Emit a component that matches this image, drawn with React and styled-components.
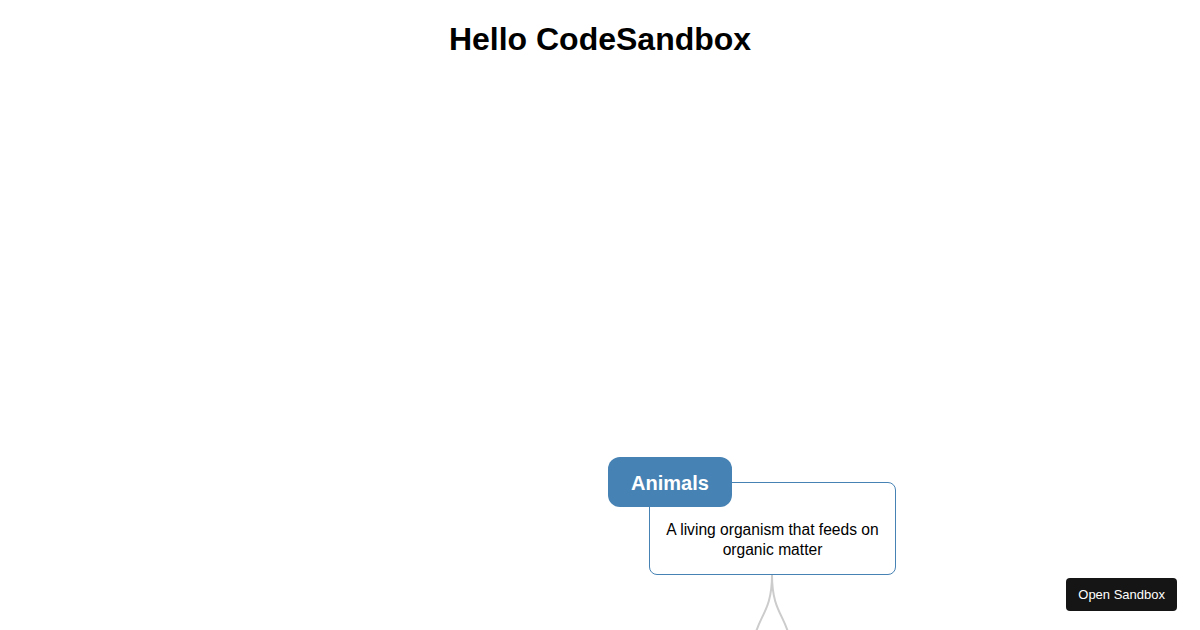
import React from 'react';
import styled, { createGlobalStyle } from 'styled-components';

const GlobalStyle = createGlobalStyle`
    html, body{
        margin: 0;
        padding: 0;
        background: #fff;
    }
    body{
        font-family: "Liberation Sans", Arial, sans-serif;
        color: #000;
    }
`;

const Page = styled.div`
    position: relative;
    height: 100vh;
    overflow: hidden;
`;

const Title = styled.h1`
    margin: 0;
    padding-top: 21px;
    text-align: center;
    font-size: 32px;
    line-height: 37px;
    font-weight: bold;
`;

const Canvas = styled.div`
    position: absolute;
    inset: 0;
`;

const Links = styled.svg`
    position: absolute;
    inset: 0;
    width: 100%;
    height: 100%;
    path{
        fill: none;
        stroke: #ccc;
        stroke-width: 2;
    }
`;

const Node = styled.div`
    position: absolute;
    left: ${({ x }) => x}px;
    top: ${({ y }) => y}px;
`;

const Label = styled.div`
    position: relative;
    z-index: 1;
    width: 124px;
    height: 50px;
    padding-top: 2px;
    box-sizing: border-box;
    border-radius: 12px;
    background-color: steelblue;
    color: #fff;
    font-size: 20px;
    font-weight: bold;
    display: flex;
    align-items: center;
    justify-content: center;
`;

const Card = styled.div`
    position: absolute;
    left: 41px;
    top: 25px;
    width: 247px;
    height: 93px;
    box-sizing: border-box;
    border: 1px solid steelblue;
    border-radius: 8px;
    background: #fff;
    padding: 37px 12px 0;
    text-align: center;
    font-size: 15.6px;
    line-height: 20px;
`;

const OpenButton = styled.button`
    position: fixed;
    right: 23px;
    bottom: 19px;
    height: 33px;
    padding: 0 12px;
    border: none;
    border-radius: 4px;
    background-color: #151515;
    color: #fff;
    font-family: "Liberation Sans", Arial, sans-serif;
    font-size: 13px;
    cursor: pointer;
`;

const nodes = [
    { id: 'animals', name: 'Animals', x: 608, y: 457, text: 'A living organism that feeds on organic matter' }
];

const links = [
    'M772,575 C772,612 758,616 754,640',
    'M772,575 C772,612 786,616 790,640'
];

export default function App() {
    return (
        <Page>
            <GlobalStyle />
            <Title>Hello CodeSandbox</Title>
            <Canvas>
                <Links>
                    {links.map((d, i) => <path key={i} d={d} />)}
                </Links>
                {nodes.map(node => (
                    <Node key={node.id} x={node.x} y={node.y}>
                        <Label>{node.name}</Label>
                        <Card>{node.text}</Card>
                    </Node>
                ))}
            </Canvas>
            <OpenButton>Open Sandbox</OpenButton>
        </Page>
    );
}
